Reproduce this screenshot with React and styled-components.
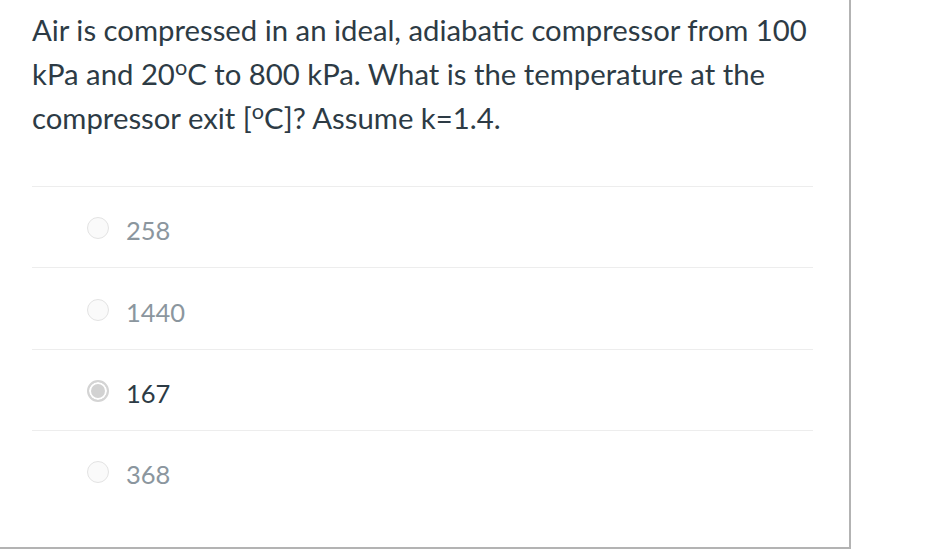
import React from "react";
import styled, { createGlobalStyle } from "styled-components";

const GlobalStyle = createGlobalStyle`
  html, body {
    margin: 0;
    padding: 0;
    background: #ffffff;
  }
`;

const Panel = styled("div")`
  box-sizing: border-box;
  width: 851px;
  height: 549px;
  border-right: 2px solid #b3b3b3;
  border-bottom: 2px solid #b3b3b3;
  padding: 8px 36px 0 32px;
  font-family: Lato, "Open Sans", sans-serif;
  background: #fff;
`;

const Question = styled("div")`
  font-size: 29.3px;
  line-height: 44px;
  color: #2d3b45;
  margin: 0 0 46px 0;
`;

const Deg = styled("span")`
  display: inline-block;
  font-size: 0.74em;
  line-height: 0.6;
  vertical-align: 0.44em;
`;

const AnswerList = styled("div")`
  display: flex;
  flex-direction: column;
`;

const Answer = styled("label")`
  display: flex;
  align-items: center;
  height: 81.4px;
  border-top: 1px solid #ededed;
  padding-left: 55px;
  padding-top: 6px;
  box-sizing: border-box;
  font-size: 25.5px;
  color: ${(p) => (p.selected ? "#2d3b45" : "#8b969e")};
`;

const Radio = styled("span")`
  box-sizing: border-box;
  width: 22px;
  height: 22px;
  border-radius: 50%;
  margin-right: 17px;
  margin-top: -4px;
  border: ${(p) => (p.checked ? "2px solid #d4d4d4" : "1px solid #e3e3e3")};
  background: ${(p) => (p.checked ? "#d2d2d2" : "#fafafa")};
  box-shadow: ${(p) => (p.checked ? "inset 0 0 0 2px #fff" : "none")};
`;

const answers = [
  { text: "258" },
  { text: "1440" },
  { text: "167", selected: true },
  { text: "368" },
];

export default function App() {
  return (
    <>
      <GlobalStyle />
      <Panel>
        <Question>
          Air is compressed in an ideal, adiabatic compressor from 100 kPa and
          20<Deg>o</Deg>C to 800 kPa. What is the temperature at the compressor
          exit [<Deg>o</Deg>C]? Assume k=1.4.
        </Question>
        <AnswerList>
          {answers.map((a) => (
            <Answer key={a.text} selected={a.selected}>
              <Radio checked={a.selected} />
              {a.text}
            </Answer>
          ))}
        </AnswerList>
      </Panel>
    </>
  );
}
